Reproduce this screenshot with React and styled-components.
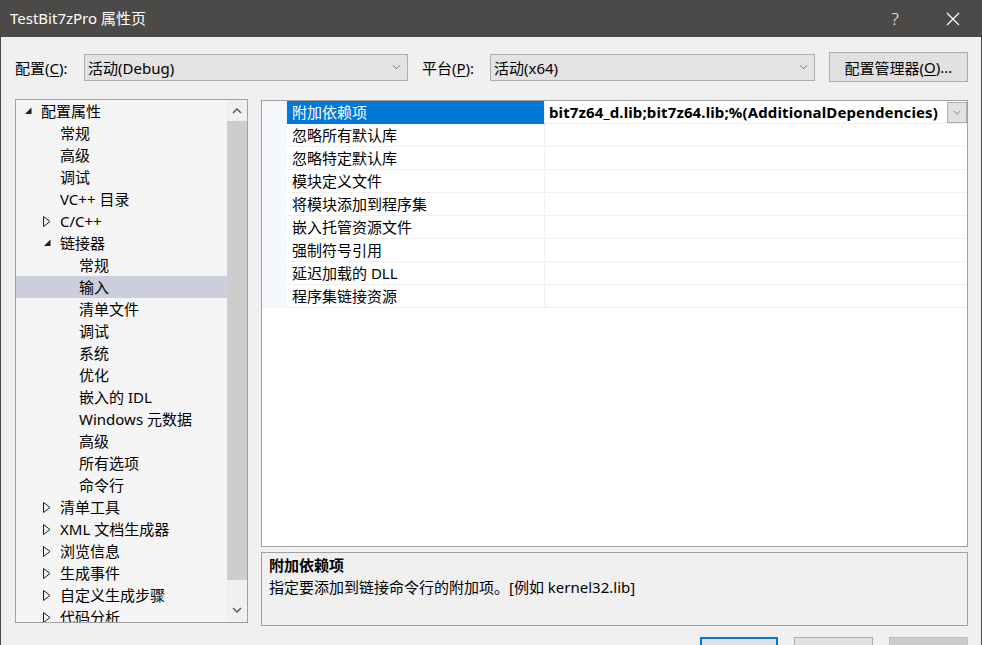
import React from "react";
import styled, { createGlobalStyle } from "styled-components";

const Global = createGlobalStyle`
  html, body { margin: 0; padding: 0; background: #f0f0f0; overflow: hidden; }
  body { font-family: "Noto Sans", "Noto Sans CJK SC", sans-serif; font-size: 15px; color: #000; }
  #root { width: 982px; height: 645px; }
`;

const Window = styled.div`
  width: 982px;
  height: 645px;
  box-sizing: border-box;
  border-left: 1px solid #4b4a48;
  border-right: 1px solid #4b4a48;
  background: #f0f0f0;
  display: flex;
  flex-direction: column;
  overflow: hidden;
`;

const TitleBar = styled.div`
  height: 37px;
  flex: none;
  background: #4b4a48;
  color: #fff;
  display: flex;
  align-items: center;
  padding-left: 9px;
  padding-right: 5px;
`;

const TitleText = styled.div`
  flex: 1;
  font-size: 15px;
  line-height: 20px;
  padding-bottom: 1px;
`;

const CaptionButton = styled.div`
  width: 46px;
  height: 37px;
  display: flex;
  align-items: center;
  justify-content: center;
  color: #fff;
  font-size: 17px;
  font-weight: 300;
  margin-left: ${(p) => p.$gap || 0}px;
`;

const Body = styled.div`
  flex: 1;
  display: flex;
  flex-direction: column;
  padding: 0 13px 0 14px;
  min-height: 0;
`;

const ConfigRow = styled.div`
  display: flex;
  align-items: center;
  height: 30px;
  margin-top: 15px;
  flex: none;
`;

const Label = styled.span`
  font-size: 15px;
  white-space: nowrap;
  width: ${(p) => p.$w}px;
  flex: none;
  padding-top: 1px;
  u { text-decoration: underline; text-underline-offset: 2px; }
`;

const Combo = styled.div`
  width: ${(p) => p.$w}px;
  height: 27px;
  box-sizing: border-box;
  border: 1px solid #adadad;
  background: #e3e3e3;
  display: flex;
  align-items: center;
  padding: 0 6px 0 3px;
  margin-right: 14px;
  flex: none;
`;

const ComboText = styled.span`
  flex: 1;
  font-size: 15px;
`;

const PushButton = styled.div`
  width: ${(p) => p.$w}px;
  height: 30px;
  box-sizing: border-box;
  border: ${(p) => (p.$default ? "2px solid #0078d7" : `1px solid ${p.$disabled ? "#bfbfbf" : "#adadad"}`)};
  background: ${(p) => (p.$disabled ? "#cccccc" : "#e1e1e1")};
  color: ${(p) => (p.$disabled ? "#838383" : "#000")};
  display: flex;
  align-items: center;
  justify-content: center;
  font-size: 15px;
  flex: none;
  padding-top: ${(p) => p.$padTop || 0}px;
  u { text-decoration: underline; text-underline-offset: 2px; }
`;

const Main = styled.div`
  display: flex;
  margin-top: 17px;
  height: 525px;
  flex: none;
  gap: 13px;
`;

const TreeBox = styled.div`
  width: 233px;
  height: 524px;
  box-sizing: border-box;
  border: 1px solid #a0a0a0;
  background: #f5f5f5;
  display: flex;
  flex: none;
`;

const TreeList = styled.div`
  flex: 1;
  overflow: hidden;
`;

const TreeRow = styled.div`
  height: 22px;
  display: flex;
  align-items: center;
  padding-left: ${(p) => 8 + p.$level * 19}px;
  background: ${(p) => (p.$selected ? "#cccedb" : "transparent")};
  white-space: nowrap;
`;

const Toggle = styled.span`
  width: 17px;
  flex: none;
  display: flex;
  align-items: center;
  box-sizing: border-box;
`;

const TreeLabel = styled.span`
  font-size: 15px;
  line-height: 22px;
`;

const ScrollBar = styled.div`
  width: 20px;
  flex: none;
  background: #f0f0f0;
  display: flex;
  flex-direction: column;
  padding-bottom: 2px;
`;

const ScrollArrow = styled.div`
  height: 21px;
  flex: none;
  display: flex;
  align-items: center;
  justify-content: center;
`;

const Thumb = styled.div`
  height: 459px;
  flex: none;
  background: #cdcdcd;
`;

const ScrollSpace = styled.div`
  flex: 1;
`;

const RightCol = styled.div`
  flex: 1;
  display: flex;
  flex-direction: column;
  margin-top: 1px;
  gap: 5px;
`;

const GridPanel = styled.div`
  height: 447px;
  flex: none;
  box-sizing: border-box;
  border: 1px solid #a0a0a0;
  background: #fff;
`;

const GridRow = styled.div`
  display: grid;
  grid-template-columns: 25px 258px 1fr;
  height: 23px;
`;

const Gutter = styled.div`
  background: #f4f7fc;
`;

const NameCell = styled.div`
  box-sizing: border-box;
  border-bottom: 1px solid ${(p) => (p.$selected ? "#0078d7" : "#f0f0f0")};
  border-right: 1px solid #f0f0f0;
  background: ${(p) => (p.$selected ? "#0078d7" : "#fff")};
  color: ${(p) => (p.$selected ? "#fff" : "#000")};
  padding-left: 5px;
  font-size: 15px;
  line-height: 22px;
  white-space: nowrap;
`;

const ValueCell = styled.div`
  box-sizing: border-box;
  border-bottom: 1px solid #f0f0f0;
  display: flex;
  align-items: center;
  padding-left: 4px;
  font-size: 15px;
  font-weight: 700;
  letter-spacing: 0.12px;
  white-space: nowrap;
`;

const ValueText = styled.span`
  flex: 1;
  line-height: 22px;
`;

const DropButton = styled.div`
  width: 20px;
  height: 21px;
  box-sizing: border-box;
  border: 1px solid #adadad;
  background: #e1e1e1;
  display: flex;
  align-items: center;
  justify-content: center;
  align-self: flex-start;
  margin-top: 1px;
`;

const DescPanel = styled.div`
  height: 74px;
  flex: none;
  box-sizing: border-box;
  border: 1px solid #a0a0a0;
  background: #f0f0f0;
  padding: 1px 7px 0;
`;

const DescTitle = styled.div`
  font-weight: 700;
  font-size: 15px;
  line-height: 22px;
`;

const DescText = styled.div`
  font-size: 15px;
  line-height: 23px;
`;

const Footer = styled.div`
  display: flex;
  justify-content: flex-end;
  gap: 16px;
  margin-top: 13px;
  flex: none;
`;

const Chevron = ({ dir = "down", w = 9, color = "#606060", sw = 1 }) => (
  <svg width={w} height={Math.ceil(w / 2) + 1} viewBox="0 0 10 6" style={{ display: "block" }}>
    <polyline
      points={dir === "down" ? "1,1 5,5 9,1" : "1,5 5,1 9,5"}
      fill="none"
      stroke={color}
      strokeWidth={sw}
    />
  </svg>
);

const Expanded = () => (
  <svg width="8" height="8" viewBox="0 0 8 8" style={{ display: "block" }}>
    <polygon points="7.5,0.5 7.5,7 1,7" fill="#1e1e1e" />
  </svg>
);

const Collapsed = () => (
  <svg width="8" height="11" viewBox="0 0 8 11" style={{ display: "block" }}>
    <polygon points="0.5,0.5 7,5.5 0.5,10.5" fill="none" stroke="#1e1e1e" strokeWidth="1" />
  </svg>
);

const CloseIcon = () => (
  <svg width="14" height="14" viewBox="0 0 14 14" style={{ display: "block" }}>
    <path d="M1 1 L13 13 M13 1 L1 13" stroke="#fff" strokeWidth="1.2" fill="none" />
  </svg>
);

const treeItems = [
  { level: 0, label: "配置属性", toggle: "open" },
  { level: 1, label: "常规" },
  { level: 1, label: "高级" },
  { level: 1, label: "调试" },
  { level: 1, label: "VC++ 目录" },
  { level: 1, label: "C/C++", toggle: "closed" },
  { level: 1, label: "链接器", toggle: "open" },
  { level: 2, label: "常规" },
  { level: 2, label: "输入", selected: true },
  { level: 2, label: "清单文件" },
  { level: 2, label: "调试" },
  { level: 2, label: "系统" },
  { level: 2, label: "优化" },
  { level: 2, label: "嵌入的 IDL" },
  { level: 2, label: "Windows 元数据" },
  { level: 2, label: "高级" },
  { level: 2, label: "所有选项" },
  { level: 2, label: "命令行" },
  { level: 1, label: "清单工具", toggle: "closed" },
  { level: 1, label: "XML 文档生成器", toggle: "closed" },
  { level: 1, label: "浏览信息", toggle: "closed" },
  { level: 1, label: "生成事件", toggle: "closed" },
  { level: 1, label: "自定义生成步骤", toggle: "closed" },
  { level: 1, label: "代码分析", toggle: "closed" },
];

const props = [
  { name: "附加依赖项", value: "bit7z64_d.lib;bit7z64.lib;%(AdditionalDependencies)", selected: true },
  { name: "忽略所有默认库" },
  { name: "忽略特定默认库" },
  { name: "模块定义文件" },
  { name: "将模块添加到程序集" },
  { name: "嵌入托管资源文件" },
  { name: "强制符号引用" },
  { name: "延迟加载的 DLL" },
  { name: "程序集链接资源" },
];

export default function App() {
  return (
    <>
      <Global />
      <Window>
        <TitleBar>
          <TitleText>TestBit7zPro 属性页</TitleText>
          <CaptionButton>?</CaptionButton>
          <CaptionButton $gap={12}>
            <CloseIcon />
          </CaptionButton>
        </TitleBar>
        <Body>
          <ConfigRow>
            <Label $w={69}>
              配置(<u>C</u>):
            </Label>
            <Combo $w={324}>
              <ComboText>活动(Debug)</ComboText>
              <Chevron />
            </Combo>
            <Label $w={68}>
              平台(<u>P</u>):
            </Label>
            <Combo $w={325}>
              <ComboText>活动(x64)</ComboText>
              <Chevron />
            </Combo>
            <PushButton $w={139}>
              配置管理器(<u>O</u>)...
            </PushButton>
          </ConfigRow>
          <Main>
            <TreeBox>
              <TreeList>
                {treeItems.map((it, i) => (
                  <TreeRow key={i} $level={it.level} $selected={it.selected}>
                    <Toggle>
                      {it.toggle === "open" && <Expanded />}
                      {it.toggle === "closed" && <Collapsed />}
                    </Toggle>
                    <TreeLabel>{it.label}</TreeLabel>
                  </TreeRow>
                ))}
              </TreeList>
              <ScrollBar>
                <ScrollArrow>
                  <Chevron dir="up" w={10} sw={1.6} />
                </ScrollArrow>
                <Thumb />
                <ScrollSpace />
                <ScrollArrow>
                  <Chevron dir="down" w={10} sw={1.6} />
                </ScrollArrow>
              </ScrollBar>
            </TreeBox>
            <RightCol>
              <GridPanel>
                {props.map((p, i) => (
                  <GridRow key={i}>
                    <Gutter />
                    <NameCell $selected={p.selected}>{p.name}</NameCell>
                    <ValueCell>
                      <ValueText>{p.value || ""}</ValueText>
                      {p.selected && (
                        <DropButton>
                          <Chevron w={8} color="#707070" />
                        </DropButton>
                      )}
                    </ValueCell>
                  </GridRow>
                ))}
              </GridPanel>
              <DescPanel>
                <DescTitle>附加依赖项</DescTitle>
                <DescText>指定要添加到链接命令行的附加项。[例如 kernel32.lib]</DescText>
              </DescPanel>
            </RightCol>
          </Main>
          <Footer>
            <PushButton $w={78} $default $padTop={8}>
              确定
            </PushButton>
            <PushButton $w={79} $padTop={8}>取消</PushButton>
            <PushButton $w={79} $disabled $padTop={8}>
              应用(<u>A</u>)
            </PushButton>
          </Footer>
        </Body>
      </Window>
    </>
  );
}
